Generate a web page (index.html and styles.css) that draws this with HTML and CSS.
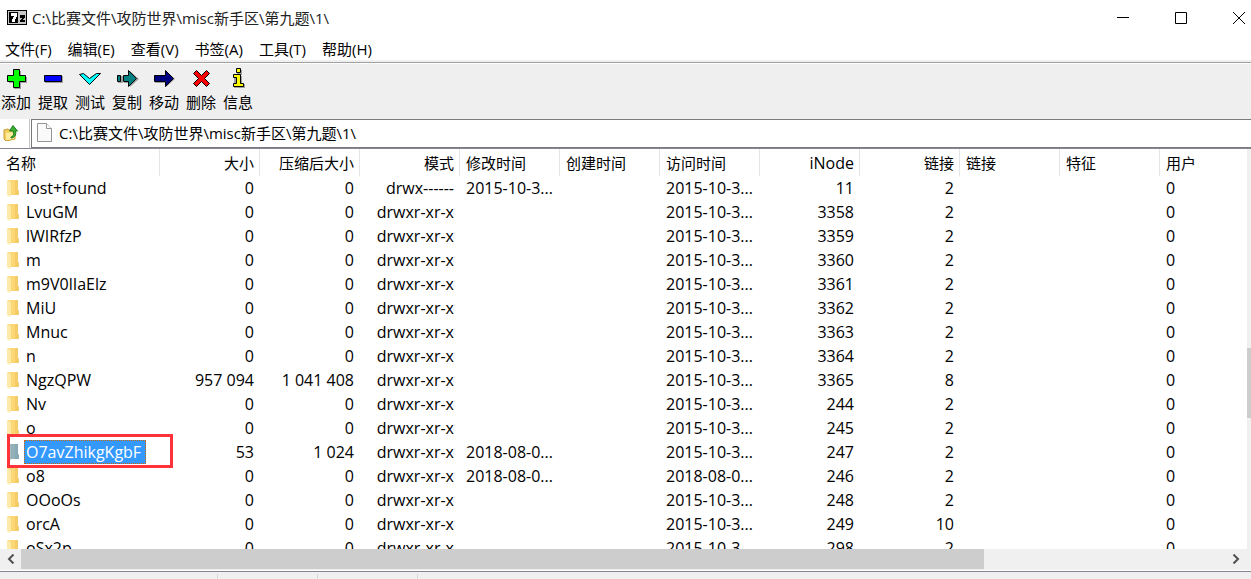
FILE: index.html
```
<!DOCTYPE html>
<html lang="zh-CN">
<head>
    <meta charset="UTF-8">
    <meta name="viewport" content="width=device-width, initial-scale=1.0">
    <title>C:\比赛文件\攻防世界\misc新手区\第九题\1\</title>
    <link rel="stylesheet" href="styles.css">
</head>
<body>
    <header class="titlebar">
        <svg class="app-icon" viewBox="0 0 20 15" shape-rendering="crispEdges">
            <rect width="20" height="15" fill="#000"/>
            <rect x="1" y="1" width="18" height="13" fill="#c8c8c8"/>
            <rect x="2" y="2" width="9" height="11" fill="#000"/>
            <path d="M4 3h6v4h-1v2h-1v3h-3v-3h1v-2h1v-1h-3z" fill="#fff"/>
            <path d="M13 5h5v3h-1v1h-1v1h2v2h-5v-2h1v-1h1v-1h-2z" fill="#000"/>
        </svg>
        <h1>C:\比赛文件\攻防世界\misc新手区\第九题\1\</h1>
        <div class="window-buttons">
            <button aria-label="最小化"><svg viewBox="0 0 12 12"><path d="M0 5.5h12"/></svg></button>
            <button aria-label="最大化"><svg viewBox="0 0 12 12"><path d="M.5.5h11v11H.5z"/></svg></button>
            <button aria-label="关闭"><svg viewBox="0 0 12 12"><path d="M0 0l12 12M12 0L0 12"/></svg></button>
        </div>
    </header>
    <nav class="menubar">
        <button>文件(F)</button>
        <button>编辑(E)</button>
        <button>查看(V)</button>
        <button>书签(A)</button>
        <button>工具(T)</button>
        <button>帮助(H)</button>
    </nav>
    <div class="toolbar">
        <button>
            <svg viewBox="0 0 24 24"><path class="shadow" d="M10 5h7v6h6v6h-6v6h-7v-6H5v-6h5z"/><path d="M9.500 3.500h6v6h6v6h-6v6h-6v-6h-6v-6h6z" fill="#0f0"/></svg>
            添加
        </button>
        <button>
            <svg viewBox="0 0 24 24"><path class="shadow" d="M4 10h18v7H4z"/><path d="M3.500 9.500h17v6h-17z" fill="#00f"/></svg>
            提取
        </button>
        <button>
            <svg viewBox="0 0 24 24"><path d="M1.500 8.500l4-1 6 5 7-5h4l-11 11z" fill="#0ff"/></svg>
            测试
        </button>
        <button>
            <svg viewBox="0 0 24 24"><path class="shadow" d="M3 10h5v7H3zM9 10h6V5l9 8-9 8v-4H9z"/><path d="M2.500 9.500h3v6h-3zM8.500 9.500h5v-5l8 8-8 8v-5h-5z" fill="#008080"/></svg>
            复制
        </button>
        <button>
            <svg viewBox="0 0 24 24"><path class="shadow" d="M3 10h11V5l9 8-9 8v-4H3z"/><path d="M2.500 9.500h11v-5l8 8-8 8v-5h-11z" fill="#000080"/></svg>
            移动
        </button>
        <button>
            <svg viewBox="0 0 24 24"><path d="M7.500 4.500l5 5 5-5 3 3-5 5 5 5-3 3-5-5-5 5-3-3 5-5-5-5z" fill="#f00"/></svg>
            删除
        </button>
        <button>
            <svg viewBox="0 0 24 24"><path class="shadow" d="M11 4h5v5h-5zM8 10h8v8h3v4H8z"/><path d="M10.500 2.500h4v4h-4zM7.500 8.500h7v9h3v3h-10v-3h3v-6h-3z" fill="#ff0"/></svg>
            信息
        </button>
    </div>
    <div class="addressbar">
        <button class="up" aria-label="向上">
            <svg viewBox="0 0 16 16">
                <path d="M1 5l4-1 1 1h6v9l-9 2-2-2z" fill="#f4cf62" stroke="#c99b2c"/>
                <path d="M3 8l10-1-2 7-8 1z" fill="#ffeb9c"/>
                <path d="M8 12c3-1 3-3 2-6H6.500L10 .5 14.500 6H12.500c1 4-1 7-4.500 7z" fill="#3caf32" stroke="#207b1e"/>
            </svg>
        </button>
        <div class="path-box">
            <svg viewBox="0 0 15 19"><path d="M.5.5h9l5 5v13H.5z" fill="#fafafa" stroke="#949494"/><path d="M9.500.5v5h5" fill="#fff" stroke="#949494"/></svg>
            <input type="text" aria-label="路径" value="C:\比赛文件\攻防世界\misc新手区\第九题\1\">
        </div>
    </div>
    <main class="list">
        <div class="table-wrap">
            <table>
                <thead>
                    <tr>
                        <th class="name">名称</th>
                        <th class="num">大小</th>
                        <th class="num">压缩后大小</th>
                        <th class="num">模式</th>
                        <th>修改时间</th>
                        <th>创建时间</th>
                        <th>访问时间</th>
                        <th class="num latin">iNode</th>
                        <th class="num">链接</th>
                        <th>链接</th>
                        <th>特征</th>
                        <th class="user">用户</th>
                    </tr>
                </thead>
                <tbody id="files"></tbody>
            </table>
        </div>
        <div class="vscroll"><div class="vthumb"></div></div>
    </main>
    <div class="hscroll">
        <button aria-label="向左滚动"><svg viewBox="0 0 8 10"><path d="M6.500.5L2 5l4.500 4.500"/></svg></button>
        <div class="track"><div class="hthumb"></div></div>
        <button aria-label="向右滚动"><svg viewBox="0 0 8 10"><path d="M1.500.5L6 5 1.500 9.500"/></svg></button>
    </div>
    <footer class="statusbar">
        <span class="first"></span>
        <span></span>
        <span></span>
    </footer>
    <script src="script.js"></script>
</body>
</html>
```
FILE: styles.css
```
* {
    box-sizing: border-box;
}
body {
    margin: 0;
    height: 100vh;
    display: flex;
    flex-direction: column;
    overflow: hidden;
    background-color: white;
    color: black;
    font-family: "Open Sans", "Noto Sans CJK SC", sans-serif;
    font-size: 15px;
    line-height: 20px;
}
button {
    font: inherit;
    color: inherit;
    background: none;
    border: none;
    padding: 0;
}
svg {
    display: block;
    flex: none;
}
.titlebar {
    display: flex;
    align-items: center;
    height: 37px;
    flex: none;
    padding: 0 6px 2px 7px;
}
.titlebar h1 {
    flex: 1;
    margin: 0 0 0 5px;
    font-size: 15px;
    font-weight: normal;
    color: #222;
}
.app-icon {
    width: 20px;
    height: 15px;
}
.window-buttons {
    display: flex;
    gap: 46px;
}
.window-buttons svg {
    width: 12px;
    height: 12px;
    fill: none;
    stroke: black;
}
.menubar {
    display: flex;
    gap: 16px;
    height: 25px;
    flex: none;
    padding: 2px 5px 3px;
    border-bottom: 2px solid #f0f0f0;
}
.toolbar {
    display: flex;
    gap: 5px;
    height: 57px;
    flex: none;
    padding-top: 3px;
    background-color: #efefef;
    border-top: 1px solid #a0a0a0;
    box-shadow: inset 0 1px white;
}
.toolbar button {
    width: 32px;
    display: flex;
    flex-direction: column;
    align-items: center;
    white-space: nowrap;
}
.toolbar svg {
    width: 24px;
    height: 24px;
    margin-bottom: 2px;
    stroke: black;
}
.toolbar .shadow {
    fill: #a0a0a0;
    stroke: none;
}
.addressbar {
    display: flex;
    gap: 1px;
    height: 30px;
    flex: none;
    border-bottom: 1px solid #828790;
}
.up {
    width: 30px;
    padding: 0 0 2px 3px;
    border-right: 1px solid #c8c8c8;
}
.up svg {
    width: 16px;
    height: 16px;
}
.path-box {
    flex: 1;
    display: flex;
    align-items: center;
    gap: 7px;
    padding: 0 0 2px 5px;
    border: 1px solid #7a7a7a;
    border-right: none;
}
.path-box svg {
    width: 15px;
    height: 19px;
}
.path-box input {
    flex: 1;
    min-width: 0;
    padding: 0;
    border: none;
    outline: none;
    font: inherit;
}
.list {
    flex: 1;
    min-height: 0;
    display: flex;
}
.table-wrap {
    flex: 1;
    min-width: 0;
    overflow: hidden;
}
table {
    width: 100%;
    table-layout: fixed;
    border-collapse: separate;
    border-spacing: 0;
}
th {
    width: 100px;
    height: 27px;
    padding: 0 5px 0 6px;
    border-right: 1px solid #e5e5e5;
    font-weight: normal;
    text-align: left;
    white-space: nowrap;
}
th.name {
    width: 160px;
}
th.user {
    width: auto;
    border-right: none;
}
td {
    height: 24px;
    padding: 0 6px;
    font-size: 16px;
    white-space: nowrap;
}
.latin {
    font-size: 16px;
}
.num {
    text-align: right;
}
td.file {
    position: relative;
    padding: 0 0 0 7px;
}
.file-name {
    display: flex;
    align-items: center;
    gap: 5px;
}
.file-name svg {
    width: 12px;
    height: 18px;
}
.file-name span {
    height: 24px;
    line-height: 24px;
    padding: 0 2px;
}
.selected .file-name span {
    padding-right: 5px;
    background-color: #3399ff;
    color: white;
    outline: 1px dotted #cc6600;
    outline-offset: -1px;
}
.selected .file-name svg {
    filter: hue-rotate(150deg) saturate(0.4) brightness(0.8);
}
/* red frame drawn over the neighbouring rows */
.mark {
    position: absolute;
    left: 7px;
    top: -6px;
    width: 166px;
    height: 34px;
    border: 3px solid #ff3339;
}
.vscroll {
    width: 4px;
    background-color: #f0f0f0;
    display: grid;
    grid-template-rows: 199fr 69fr 131fr;
}
.vthumb {
    grid-row: 2;
    background-color: #cdcdcd;
}
.hscroll {
    display: flex;
    height: 21px;
    flex: none;
    padding: 0 5px 1px 0;
    background-color: #f0f0f0;
}
.hscroll button {
    width: 21px;
    display: flex;
    align-items: center;
    justify-content: center;
}
.hscroll svg {
    width: 8px;
    height: 10px;
    fill: none;
    stroke: #505050;
    stroke-width: 2;
}
.track {
    flex: 1;
}
.hthumb {
    width: 80%;
    height: 100%;
    background-color: #cdcdcd;
}
.statusbar {
    display: flex;
    height: 9px;
    flex: none;
    border-top: 1px solid white;
    background-color: #f0f0f0;
    box-shadow: inset 0 1px #828790;
    padding-top: 3px;
}
.statusbar span {
    width: 100px;
    border-right: 1px solid #d7d7d7;
}
.statusbar .first {
    width: 218px;
}
```
FILE: script.js
```
// name, size, packed size, mode, modified, accessed, inode, links
const files = [
    ['lost+found', '0', '0', 'drwx------', '2015-10-3...', '2015-10-3...', '11', '2'],
    ['LvuGM', '0', '0', 'drwxr-xr-x', '', '2015-10-3...', '3358', '2'],
    ['lWIRfzP', '0', '0', 'drwxr-xr-x', '', '2015-10-3...', '3359', '2'],
    ['m', '0', '0', 'drwxr-xr-x', '', '2015-10-3...', '3360', '2'],
    ['m9V0lIaElz', '0', '0', 'drwxr-xr-x', '', '2015-10-3...', '3361', '2'],
    ['MiU', '0', '0', 'drwxr-xr-x', '', '2015-10-3...', '3362', '2'],
    ['Mnuc', '0', '0', 'drwxr-xr-x', '', '2015-10-3...', '3363', '2'],
    ['n', '0', '0', 'drwxr-xr-x', '', '2015-10-3...', '3364', '2'],
    ['NgzQPW', '957 094', '1 041 408', 'drwxr-xr-x', '', '2015-10-3...', '3365', '8'],
    ['Nv', '0', '0', 'drwxr-xr-x', '', '2015-10-3...', '244', '2'],
    ['o', '0', '0', 'drwxr-xr-x', '', '2015-10-3...', '245', '2'],
    ['O7avZhikgKgbF', '53', '1 024', 'drwxr-xr-x', '2018-08-0...', '2015-10-3...', '247', '2'],
    ['o8', '0', '0', 'drwxr-xr-x', '2018-08-0...', '2018-08-0...', '246', '2'],
    ['OOoOs', '0', '0', 'drwxr-xr-x', '', '2015-10-3...', '248', '2'],
    ['orcA', '0', '0', 'drwxr-xr-x', '', '2015-10-3...', '249', '10'],
    ['oSx2p', '0', '0', 'drwxr-xr-x', '', '2015-10-3...', '298', '2']
];

const folderIcon = `<svg viewBox="0 0 12 18">
    <path d="M1 1h10v10l1 1v4H2z" fill="#fbd775"/>
    <path d="M8 1h3v10l1 1v4H8z" fill="#f5cd68"/>
    <path d="M0 1l4 2v12l-1 3-3-2z" fill="#ffe9a6"/>
</svg>`;

const selectedName = 'O7avZhikgKgbF';

document.getElementById('files').innerHTML = files.map(f => {
    const selected = f[0] === selectedName;
    return `
        <tr class="${selected ? 'selected' : ''}">
            <td class="file">
                <div class="file-name">${folderIcon}<span>${f[0]}</span></div>
                ${selected ? '<div class="mark"></div>' : ''}
            </td>
            <td class="num">${f[1]}</td>
            <td class="num">${f[2]}</td>
            <td class="num">${f[3]}</td>
            <td>${f[4]}</td>
            <td></td>
            <td>${f[5]}</td>
            <td class="num">${f[6]}</td>
            <td class="num">${f[7]}</td>
            <td></td>
            <td></td>
            <td>0</td>
        </tr>`;
}).join('');
```
